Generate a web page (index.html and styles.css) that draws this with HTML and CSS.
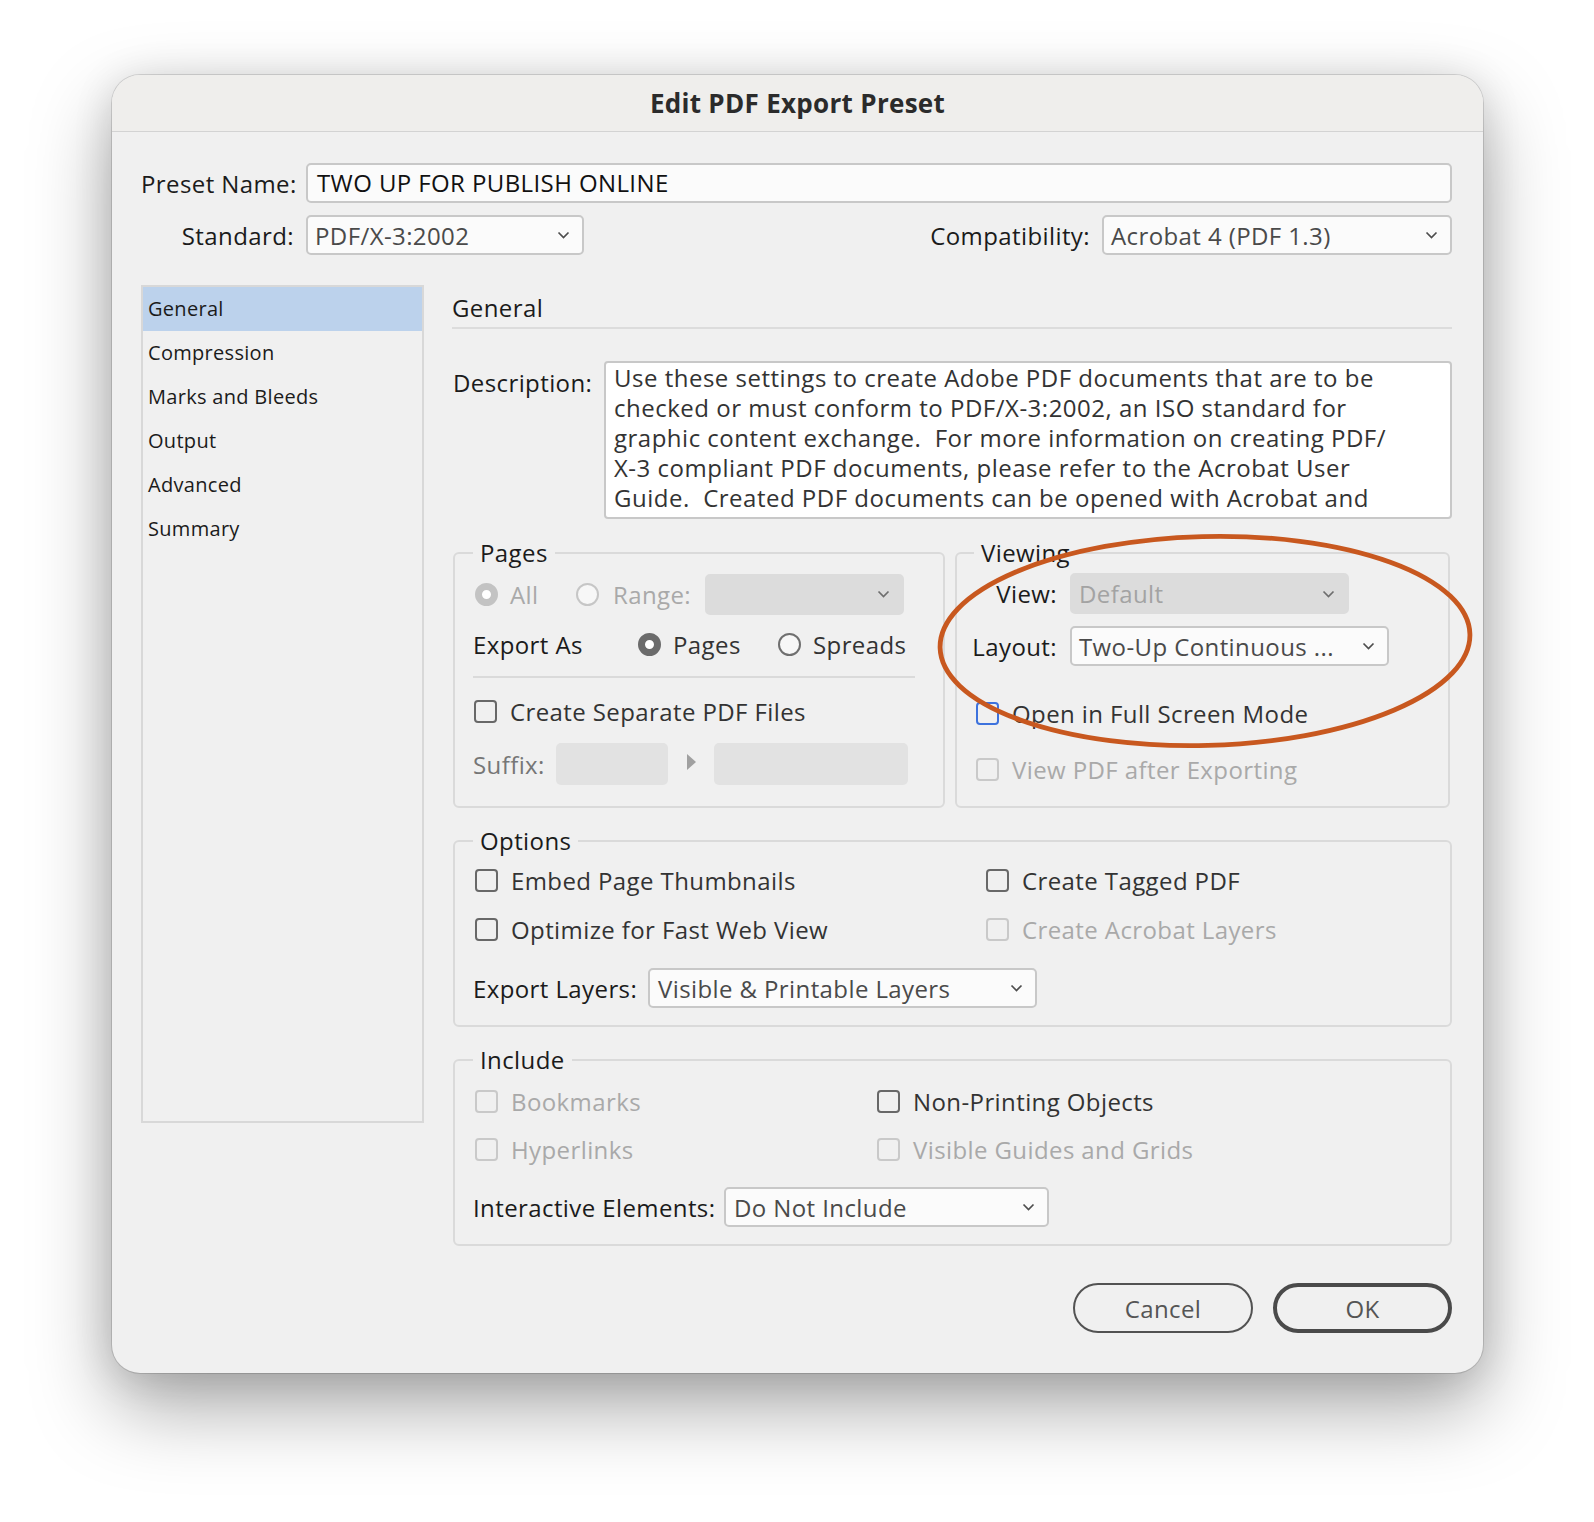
FILE: index.html
```html
<!DOCTYPE html>
<html lang="en">
<head>
    <meta charset="UTF-8">
    <meta name="viewport" content="width=device-width, initial-scale=1.0">
    <title>Edit PDF Export Preset</title>
    <link rel="stylesheet" href="styles.css">
</head>
<body>
    <div class="dialog">
        <div class="titlebar">Edit PDF Export Preset</div>
        <div class="content">
            <div class="field-row">
                <label class="row-label">Preset Name:</label>
                <div class="text-input name-input">TWO UP FOR PUBLISH ONLINE</div>
            </div>
            <div class="field-row second-row">
                <label class="row-label">Standard:</label>
                <div class="select standard-select">
                    <span>PDF/X-3:2002</span>
                    <svg class="chevron" viewBox="0 0 13 8"><polyline points="1.5,1.5 6.5,6.5 11.5,1.5"/></svg>
                </div>
                <label class="compat-label">Compatibility:</label>
                <div class="select compat-select">
                    <span>Acrobat 4 (PDF 1.3)</span>
                    <svg class="chevron" viewBox="0 0 13 8"><polyline points="1.5,1.5 6.5,6.5 11.5,1.5"/></svg>
                </div>
            </div>

            <div class="main">
                <ul class="sidebar">
                    <li class="selected">General</li>
                    <li>Compression</li>
                    <li>Marks and Bleeds</li>
                    <li>Output</li>
                    <li>Advanced</li>
                    <li>Summary</li>
                </ul>

                <div class="panel">
                    <div class="panel-title">General</div>

                    <div class="desc-row">
                        <div class="desc-label">Description:</div>
                        <div class="desc-box">Use these settings to create Adobe PDF documents that are to be<br>checked or must conform to PDF/X-3:2002, an ISO standard for<br>graphic content exchange.&nbsp; For more information on creating PDF/<br>X-3 compliant PDF documents, please refer to the Acrobat User<br>Guide.&nbsp; Created PDF documents can be opened with Acrobat and<br>Adobe Reader 4.0 and later.</div>
                    </div>

                    <div class="group-row">
                        <fieldset class="group pages-group">
                            <legend>Pages</legend>
                            <div class="pg-row">
                                <span class="radio on disabled"></span>
                                <span class="opt-text dim all-text">All</span>
                                <span class="radio disabled"></span>
                                <span class="opt-text dim range-text">Range:</span>
                                <div class="select disabled range-select">
                                    <span></span>
                                    <svg class="chevron" viewBox="0 0 13 8"><polyline points="1.5,1.5 6.5,6.5 11.5,1.5"/></svg>
                                </div>
                            </div>
                            <div class="pg-row export-row">
                                <span class="export-label">Export As</span>
                                <span class="radio on"></span>
                                <span class="opt-text pages-text">Pages</span>
                                <span class="radio"></span>
                                <span class="opt-text">Spreads</span>
                            </div>
                            <div class="separator"></div>
                            <div class="check-row separate-row">
                                <span class="checkbox"></span>
                                <span>Create Separate PDF Files</span>
                            </div>
                            <div class="suffix-row">
                                <span class="suffix-label">Suffix:</span>
                                <div class="blank-input suffix-a"></div>
                                <span class="arrow"></span>
                                <div class="blank-input suffix-b"></div>
                            </div>
                        </fieldset>

                        <fieldset class="group viewing-group">
                            <legend>Viewing</legend>
                            <div class="view-grid">
                                <span class="v-label">View:</span>
                                <div class="select disabled view-select">
                                    <span>Default</span>
                                    <svg class="chevron" viewBox="0 0 13 8"><polyline points="1.5,1.5 6.5,6.5 11.5,1.5"/></svg>
                                </div>
                                <span class="v-label">Layout:</span>
                                <div class="select layout-select">
                                    <span>Two-Up Continuous ...</span>
                                    <svg class="chevron" viewBox="0 0 13 8"><polyline points="1.5,1.5 6.5,6.5 11.5,1.5"/></svg>
                                </div>
                            </div>
                            <div class="check-row fullscreen-row">
                                <span class="checkbox focus"></span>
                                <span>Open in Full Screen Mode</span>
                            </div>
                            <div class="check-row after-row dim">
                                <span class="checkbox"></span>
                                <span>View PDF after Exporting</span>
                            </div>
                        </fieldset>
                    </div>

                    <fieldset class="group options-group">
                        <legend>Options</legend>
                        <div class="check-grid">
                            <div class="check-row">
                                <span class="checkbox"></span>
                                <span>Embed Page Thumbnails</span>
                            </div>
                            <div class="check-row">
                                <span class="checkbox"></span>
                                <span>Create Tagged PDF</span>
                            </div>
                            <div class="check-row">
                                <span class="checkbox"></span>
                                <span>Optimize for Fast Web View</span>
                            </div>
                            <div class="check-row dim">
                                <span class="checkbox"></span>
                                <span>Create Acrobat Layers</span>
                            </div>
                        </div>
                        <div class="select-row">
                            <span class="select-label layers-label">Export Layers:</span>
                            <div class="select layers-select">
                                <span>Visible &amp; Printable Layers</span>
                                <svg class="chevron" viewBox="0 0 13 8"><polyline points="1.5,1.5 6.5,6.5 11.5,1.5"/></svg>
                            </div>
                        </div>
                    </fieldset>

                    <fieldset class="group include-group">
                        <legend>Include</legend>
                        <div class="check-grid">
                            <div class="check-row dim">
                                <span class="checkbox"></span>
                                <span>Bookmarks</span>
                            </div>
                            <div class="check-row">
                                <span class="checkbox"></span>
                                <span>Non-Printing Objects</span>
                            </div>
                            <div class="check-row dim">
                                <span class="checkbox"></span>
                                <span>Hyperlinks</span>
                            </div>
                            <div class="check-row dim">
                                <span class="checkbox"></span>
                                <span>Visible Guides and Grids</span>
                            </div>
                        </div>
                        <div class="select-row">
                            <span class="select-label interactive-label">Interactive Elements:</span>
                            <div class="select interactive-select">
                                <span>Do Not Include</span>
                                <svg class="chevron" viewBox="0 0 13 8"><polyline points="1.5,1.5 6.5,6.5 11.5,1.5"/></svg>
                            </div>
                        </div>
                    </fieldset>
                </div>
            </div>

            <div class="buttons">
                <button type="button" class="btn">Cancel</button>
                <button type="button" class="btn default">OK</button>
            </div>
        </div>

        <!-- hand-drawn highlight round the Viewing options -->
        <svg class="highlight" viewBox="0 0 560 240">
            <ellipse cx="280" cy="120" rx="265" ry="104.5" transform="rotate(-1.5 280 120)"/>
        </svg>
    </div>
</body>
</html>
```

FILE: styles.css
```css
* {
    box-sizing: border-box;
}
body {
    margin: 0;
    padding: 75px 0 160px 112px;
    background: #ffffff;
    font-family: "Open Sans", "Noto Sans", sans-serif;
    font-size: 24px;
    letter-spacing: 0.4px;
    color: #1b1b1b;
}
.dialog {
    position: relative;
    width: 1371px;
    height: 1298px;
    background: #f0f0f0;
    border-radius: 28px;
    overflow: hidden;
    box-shadow: 0 0 0 1px rgba(0, 0, 0, 0.13), 0 4px 40px rgba(0, 0, 0, 0.12), 0 34px 80px rgba(0, 0, 0, 0.34);
}
.titlebar {
    height: 57px;
    line-height: 56px;
    background: #efeeec;
    border-bottom: 1px solid #d3d3d3;
    text-align: center;
    font-size: 26px;
    font-weight: 700;
    letter-spacing: 0.3px;
    color: #2b2b2b;
}
.content {
    padding: 31px 31px 0 29px;
}

/* top fields */
.field-row {
    display: flex;
    align-items: center;
    height: 40px;
}
.second-row {
    margin-top: 12px;
}
.row-label {
    width: 153px;
    margin-right: 12px;
    text-align: right;
    white-space: nowrap;
}
.text-input {
    flex: 1;
    height: 40px;
    line-height: 36px;
    padding: 0 9px;
    background: #fbfbfb;
    border: 2px solid #c8c8c8;
    border-radius: 5px;
    color: #111;
}
.select {
    display: flex;
    align-items: center;
    justify-content: space-between;
    height: 40px;
    padding: 0 12px 0 7px;
    background: #fbfbfb;
    border: 2px solid #c8c8c8;
    border-radius: 5px;
    color: #4a4a4a;
    white-space: nowrap;
}
.select.disabled {
    background: #dcdcdc;
    border-color: #dcdcdc;
    color: #a3a3a3;
    height: 41px;
}
.chevron {
    width: 13px;
    height: 8px;
    flex: none;
    fill: none;
    stroke: #4d4d4d;
    stroke-width: 1.7;
}
.select.disabled .chevron {
    stroke: #6e6e6e;
}
.standard-select {
    width: 278px;
}
.compat-label {
    margin-left: auto;
    margin-right: 12px;
}
.compat-select {
    width: 350px;
}

/* main area */
.main {
    display: flex;
    align-items: flex-start;
    gap: 28px;
    margin-top: 30px;
}
.sidebar {
    width: 283px;
    height: 838px;
    margin: 0;
    padding: 0;
    list-style: none;
    border: 2px solid #d8d8d8;
    font-size: 20px;
    letter-spacing: 0.3px;
}
.sidebar li {
    height: 44px;
    line-height: 44px;
    padding-left: 5px;
}
.sidebar li.selected {
    background: #bcd2ec;
}
.panel {
    flex: 1;
}
.panel-title {
    height: 44px;
    line-height: 46px;
    border-bottom: 2px solid #dcdcdc;
}
.desc-row {
    display: flex;
    margin-top: 32px;
}
.desc-label {
    width: 152px;
    padding-left: 1px;
    padding-top: 7px;
    line-height: 30px;
}
.desc-box {
    flex: 1;
    height: 158px;
    overflow: hidden;
    padding: 0 8px;
    line-height: 30px;
    letter-spacing: 0.5px;
    background: #fff;
    border: 2px solid #c8c8c8;
    border-radius: 4px;
    color: #333;
    white-space: nowrap;
}

/* group boxes */
.group {
    margin: 0;
    min-width: 0;
    padding: 0 18px;
    border: 2px solid #dadada;
    border-radius: 6px;
}
.group legend {
    padding: 0 7px;
    line-height: 30px;
}
.group-row {
    display: flex;
    gap: 10px;
    margin-top: 19px;
    margin-left: 1px;
}
.pages-group {
    width: 492px;
    padding-top: 5px;
    padding-bottom: 21px;
}
.viewing-group {
    flex: 1;
    margin-right: 2px;
    padding-top: 5px;
    padding-left: 17px;
}
.dim {
    color: #a9a9a9;
}
.pg-row {
    display: flex;
    align-items: center;
    height: 42px;
}
.export-row {
    margin-top: 8px;
}
.radio {
    width: 23px;
    height: 23px;
    flex: none;
    border-radius: 50%;
    border: 2px solid #6f6f6f;
    background: #f7f7f7;
}
.radio.disabled {
    border-color: #c6c6c6;
}
.radio.on {
    border: 7.5px solid #6b6b6b;
    background: #fff;
}
.radio.on.disabled {
    border-color: #c3c3c3;
}
.pg-row .radio:first-child {
    margin-left: 2px;
}
.opt-text {
    margin-left: 12px;
    color: #333;
}
.opt-text.dim {
    color: #a9a9a9;
}
.all-text {
    width: 66px;
}
.range-text {
    margin-left: 14px;
    width: 92px;
}
.range-select {
    width: 199px;
}
.export-label {
    width: 165px;
}
.pages-text {
    width: 105px;
}
.separator {
    height: 2px;
    margin: 11px 10px 0 0;
    background: #dadada;
}
.check-row {
    display: flex;
    align-items: center;
    height: 32px;
    color: #333;
}
.check-row.dim {
    color: #a9a9a9;
}
.checkbox {
    width: 23px;
    height: 23px;
    flex: none;
    margin: 0 13px 0 2px;
    border: 2px solid #686868;
    border-radius: 4px;
}
.check-row.dim .checkbox {
    border-color: #c9c9c9;
}
.checkbox.focus {
    border-color: #3d72dd;
}
.separate-row {
    margin-top: 17px;
}
.separate-row .checkbox {
    margin-left: 1px;
}
.suffix-row {
    display: flex;
    align-items: center;
    margin-top: 16px;
    height: 42px;
}
.suffix-label {
    width: 83px;
    color: #767676;
}
.blank-input {
    height: 42px;
    background: #e2e2e2;
    border-radius: 5px;
}
.suffix-a {
    width: 112px;
}
.suffix-b {
    width: 194px;
}
.arrow {
    width: 0;
    height: 0;
    margin: -4px 18px 0 19px;
    border-top: 8px solid transparent;
    border-bottom: 8px solid transparent;
    border-left: 9px solid #a0a0a0;
}
.view-grid {
    display: grid;
    grid-template-columns: 83px auto;
    column-gap: 13px;
    row-gap: 12px;
    align-items: center;
    justify-items: start;
}
.v-label {
    justify-self: end;
}
.view-select {
    width: 279px;
}
.layout-select {
    width: 319px;
}
.fullscreen-row {
    margin-top: 31px;
}
.after-row {
    margin-top: 24px;
}

.options-group {
    margin-top: 18px;
    padding-top: 8px;
    padding-bottom: 17px;
    margin-left: 1px;
}
.include-group {
    margin-top: 18px;
    padding-top: 10px;
    padding-bottom: 17px;
    margin-left: 1px;
}
.check-grid {
    display: grid;
    grid-template-columns: 511px auto;
    row-gap: 17px;
}
.include-group .check-grid {
    grid-template-columns: 402px auto;
    row-gap: 16px;
}
.select-row {
    display: flex;
    align-items: center;
    margin-top: 23px;
}
.include-group .select-row {
    margin-top: 22px;
}
.select-label {
    margin-right: 12px;
    white-space: nowrap;
}
.layers-label {
    width: 163px;
}
.layers-select {
    width: 389px;
    padding-left: 8px;
}
.interactive-label {
    width: 239px;
}
.interactive-select {
    width: 325px;
    padding-left: 8px;
}

/* buttons */
.buttons {
    display: flex;
    justify-content: flex-end;
    gap: 20px;
    margin-top: 37px;
}
.btn {
    height: 50px;
    width: 180px;
    border: 2px solid #525252;
    border-radius: 25px;
    background: transparent;
    font-family: inherit;
    font-size: 24px;
    letter-spacing: 0.4px;
    color: #555;
}
.btn.default {
    width: 179px;
    border: 4px solid #4a4a4a;
}

.highlight {
    position: absolute;
    left: 813px;
    top: 446px;
    width: 560px;
    height: 240px;
    fill: none;
    stroke: #c8581f;
    stroke-width: 4.8;
}
```
